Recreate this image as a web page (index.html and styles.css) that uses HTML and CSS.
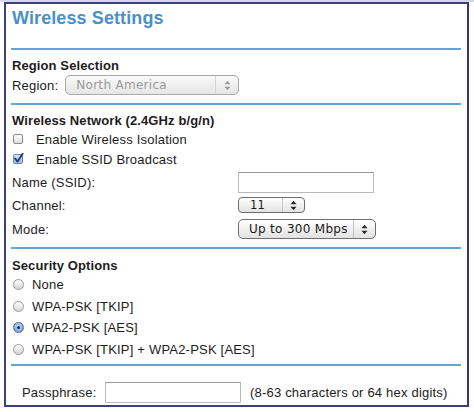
FILE: index.html
```html
<!DOCTYPE html>
<html>
<head>
<meta charset="utf-8">
<title>Wireless Settings</title>
<link rel="stylesheet" href="styles.css">
</head>
<body>
<div class="panel">
  <div class="title-block"><h1 class="title">Wireless Settings</h1></div>
  <div class="rule"></div>

  <section class="sec sec-region">
    <div class="heading">Region Selection</div>
    <div class="row row-region">
      <span class="lbl-inline">Region:</span>
      <div class="select select-disabled w-region">
        <span class="sel-text">North America</span>
        <span class="sel-arrow"><svg width="7" height="11" viewBox="0 0 7 11"><polygon points="0.5,4.3 3.5,0.8 6.5,4.3"/><polygon points="0.5,6.7 3.5,10.2 6.5,6.7"/></svg></span>
      </div>
    </div>
  </section>
  <div class="rule"></div>

  <section class="sec sec-wireless">
    <div class="heading">Wireless Network (2.4GHz b/g/n)</div>
    <div class="row row-cb">
      <span class="checkbox"></span>
      <span class="cb-text">Enable Wireless Isolation</span>
    </div>
    <div class="row row-cb">
      <span class="checkbox checked"><svg width="12" height="12" viewBox="0 0 12 12"><path d="M2.2 5.6 L4.6 8.6 L9.6 0.8" fill="none" stroke="#1f3b7a" stroke-width="1.9" stroke-linecap="round" stroke-linejoin="round"/></svg></span>
      <span class="cb-text">Enable SSID Broadcast</span>
    </div>
    <div class="row row-field row-name">
      <span class="lbl">Name (SSID):</span>
      <span class="textbox w-ssid"></span>
    </div>
    <div class="row row-field row-channel">
      <span class="lbl">Channel:</span>
      <div class="select select-small w-channel">
        <span class="sel-text">11</span>
        <span class="sel-arrow"><svg width="7" height="11" viewBox="0 0 7 11"><polygon points="0.5,4.3 3.5,0.8 6.5,4.3"/><polygon points="0.5,6.7 3.5,10.2 6.5,6.7"/></svg></span>
      </div>
    </div>
    <div class="row row-field row-mode">
      <span class="lbl">Mode:</span>
      <div class="select w-mode">
        <span class="sel-text">Up to 300 Mbps</span>
        <span class="sel-arrow"><svg width="7" height="11" viewBox="0 0 7 11"><polygon points="0.5,4.3 3.5,0.8 6.5,4.3"/><polygon points="0.5,6.7 3.5,10.2 6.5,6.7"/></svg></span>
      </div>
    </div>
  </section>
  <div class="rule"></div>

  <section class="sec sec-security">
    <div class="heading">Security Options</div>
    <div class="row row-radio"><span class="radio"></span><span class="rb-text">None</span></div>
    <div class="row row-radio"><span class="radio"></span><span class="rb-text">WPA-PSK [TKIP]</span></div>
    <div class="row row-radio"><span class="radio selected"></span><span class="rb-text">WPA2-PSK [AES]</span></div>
    <div class="row row-radio"><span class="radio"></span><span class="rb-text">WPA-PSK [TKIP] + WPA2-PSK [AES]</span></div>
  </section>
  <div class="rule"></div>

  <section class="sec sec-pass">
    <div class="row row-pass">
      <span class="lbl-pass">Passphrase:</span>
      <span class="textbox w-pass"></span>
      <span class="hint">(8-63 characters or 64 hex digits)</span>
    </div>
  </section>
</div>
</body>
</html>
```

FILE: styles.css
```css
* { box-sizing: border-box; }

html, body {
  margin: 0;
  padding: 0;
  background: #ffffff;
}

body {
  font-family: "Liberation Sans", Arial, Helvetica, sans-serif;
  font-size: 13px;
  letter-spacing: 0.2px;
  color: #1c1c1c;
  border-top: 2px solid #d5d6e8;
}

.panel {
  width: 465px;
  height: 405px;
  margin-left: 4px;
  border: 2px solid #3c4078;
  border-right-color: #34386c;
  background: #ffffff;
}

.title-block {
  height: 44px;
  padding: 4px 0 0 6px;
}

.title {
  margin: 0;
  font-size: 18px;
  line-height: 21px;
  font-weight: bold;
  letter-spacing: 0.1px;
  color: #4a8fcb;
}

.rule {
  height: 2px;
  margin: 0 6px 0 5px;
  background: #66a3d7;
}

.sec {
  padding-left: 6px;
}

.sec-region { height: 53px; padding-top: 7px; }
.sec-wireless { height: 142px; padding-top: 7px; }
.sec-security { height: 115px; padding-top: 8px; }
.sec-pass { padding-top: 15px; }

.heading {
  font-weight: bold;
  height: 18px;
  line-height: 18px;
  letter-spacing: 0.1px;
}

.sec-wireless .heading,
.sec-security .heading {
  height: 17px;
  line-height: 17px;
}

.row {
  display: flex;
  align-items: center;
}

.row-region { height: 20px; }

.lbl-inline {
  margin-right: 7px;
}

.lbl {
  width: 226px;
  flex: none;
}

/* selects */
.select {
  display: flex;
  align-items: center;
  height: 20px;
  border: 1px solid #6e6e6e;
  border-radius: 5px;
  background: linear-gradient(#ffffff, #f1f1f1 50%, #e2e2e2);
  font-family: "DejaVu Sans", Verdana, sans-serif;
  font-size: 12px;
  letter-spacing: 0.3px;
  color: #1a1a1a;
}

.sel-text {
  flex: 1;
  padding-left: 10px;
  white-space: nowrap;
}

.sel-arrow {
  width: 22px;
  height: 100%;
  flex: none;
  display: flex;
  align-items: center;
  justify-content: center;
  border-left: 1px solid #c4c4c4;
}

.sel-arrow svg { fill: #2a2a2a; }

.select-disabled {
  border-color: #a9a9a9;
  color: #9a9a9a;
  background: linear-gradient(#fafafa, #efefef 50%, #e6e6e6);
}

.select-disabled .sel-arrow { border-left-color: #d4d4d4; }
.select-disabled .sel-arrow svg { fill: #9a9a9a; }

.select-small {
  height: 16px;
  font-size: 11.5px;
  border-radius: 4px;
}

.select-small .sel-text { padding-left: 11px; }

.w-region { width: 174px; }
.w-region .sel-arrow { width: 23px; }
.w-channel { width: 67px; }
.w-mode { width: 138px; }

/* checkboxes */
.row-cb { height: 20px; }

.checkbox {
  position: relative;
  width: 10px;
  height: 10px;
  margin-left: 1px;
  margin-right: 13px;
  flex: none;
  border: 1px solid #8c8c8c;
  border-radius: 2px;
  background: linear-gradient(#ffffff, #dedede);
}

.checkbox.checked {
  border-color: #6d86aa;
  background: linear-gradient(#d6e6f8, #9ebfe6);
}

.checkbox svg {
  position: absolute;
  left: -1px;
  top: -2px;
}

/* text fields */
.row-name { height: 22px; margin-top: 2px; }
.row-channel { height: 24px; }
.row-mode { height: 24px; }

.textbox {
  display: block;
  height: 21px;
  border: 1px solid #b9b9b9;
  border-top-color: #9a9a9a;
  background: #ffffff;
  flex: none;
}

.w-ssid { width: 136px; }
.w-pass { width: 136px; }

/* radios */
.row-radio { height: 21.5px; }

.radio {
  position: relative;
  width: 11px;
  height: 11px;
  margin-left: 1px;
  margin-right: 8px;
  flex: none;
  border: 1px solid #9a9a9a;
  border-radius: 50%;
  background: linear-gradient(#ffffff, #d4d4d4);
}

.radio.selected {
  border-color: #4f6f9f;
  background: radial-gradient(circle at 50% 40%, #c7dcf5, #5f93d4);
}

.radio.selected::after {
  content: "";
  position: absolute;
  left: 3px;
  top: 3px;
  width: 3px;
  height: 3px;
  border-radius: 50%;
  background: #1a2a48;
}

/* passphrase */
.row-pass {
  height: 22px;
  padding-left: 10px;
}

.lbl-pass {
  width: 83px;
  flex: none;
}

.hint {
  margin-left: 9px;
  white-space: nowrap;
}
```
